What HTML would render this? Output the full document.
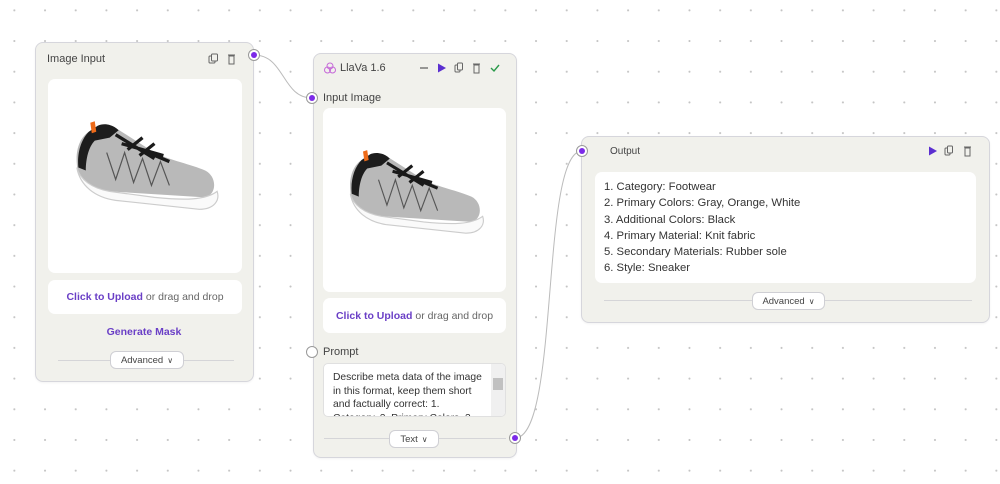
<!DOCTYPE html>
<html><head><meta charset="utf-8"><style>
*{box-sizing:border-box;margin:0;padding:0}
body{width:1000px;height:484px;overflow:hidden;position:relative;font-family:"Liberation Sans",sans-serif;color:#444;
background:#fff radial-gradient(circle,#c4c4c4 0.8px,transparent 1.2px);background-size:30.7px 30.7px;background-position:-1px -5px}
.node{position:absolute;background:#f1f1ec;border:1px solid #d6d6dc;border-radius:8px;box-shadow:0 1px 2px rgba(0,0,0,.05)}
.box{position:absolute;background:#fff;border-radius:7px}
.t{position:absolute;font-size:11px;color:#444;white-space:nowrap}
.up{display:flex;align-items:center;justify-content:center;font-size:10.5px;color:#666}
.up b{color:#6a3fc6;font-weight:bold;margin-right:3px}
.line{position:absolute;height:1px;background:#d5d5d8}
.btn{position:absolute;background:#fff;border:1px solid #cfcfd4;border-radius:6px;font-size:9.5px;color:#444;display:flex;align-items:center;justify-content:center;gap:4px}
.h{position:absolute;width:12px;height:12px;border-radius:50%;background:#fff;border:1px solid #999;}
.h.f::after{content:"";position:absolute;left:2px;top:2px;width:6px;height:6px;border-radius:50%;background:#7c2ae8}
svg.ic{position:absolute}
</style></head><body>
<svg style="position:absolute;left:0;top:0" width="1000" height="484">
<path d="M254 55 C285 55 282 98 312 98" stroke="#bbb" fill="none" stroke-width="1"/>
<path d="M515 438 C560 438 540 151 582 151" stroke="#bbb" fill="none" stroke-width="1"/>
<defs>
<g id="shoe">
<path d="M18 48 C17 38 20 30 26 26 L32 22 C36 20 42 22 48 26 L70 40 C80 45 95 48 104 52 C112 56 112 68 104 70 L40 66 C28 64 18 58 18 48Z" fill="#b9b9b9"/>
<path d="M18 50 C20 62 30 70 44 72 L100 78 C110 78 114 72 112 66 C104 72 90 72 70 70 L40 66 C28 64 20 58 18 50Z" fill="#fafafa" stroke="#ccc" stroke-width=".8"/>
<path d="M26 26 L32 22 C36 20 42 21 46 25 L40 30 L30 32 C26 36 24 44 24 52 L19 50 C18 40 21 31 26 26Z" fill="#1d1d1d"/>
<path d="M27 20 L30 19 L31 26 L28 27Z" fill="#ee6b1a"/>
<path d="M44 28 L70 44 M48 34 L76 42 M52 38 L62 30 M60 42 L70 34 M56 36 L80 46" stroke="#1a1a1a" stroke-width="2.2" fill="none"/>
<path d="M38 40 L44 58 L50 40 L56 60 L62 44 L68 62 L74 46 L80 62" stroke="#555" stroke-width=".8" fill="none"/>
</g>
</defs>
</svg>

<div class="node" style="left:35px;top:42px;width:219px;height:340px"></div>
<div class="t" style="left:47px;top:53px">Image Input</div>
<svg class="ic" style="left:208px;top:53px" width="32" height="12"><rect x="1" y="3" width="6" height="7" rx="1" fill="none" stroke="#666"/><rect x="3.5" y="1" width="6" height="7" rx="1" fill="#f1f1ec" stroke="#666"/><path d="M20 2h7M21 3h5v8h-5z" fill="none" stroke="#666"/></svg>
<div class="box" style="left:48px;top:79px;width:194px;height:194px">
<svg width="194" height="194" viewBox="0 0 130 130" style="position:absolute;left:2px;top:-4px"><use href="#shoe" transform="translate(0,12)"/></svg></div>
<div class="box up" style="left:48px;top:280px;width:194px;height:34px"><b>Click to Upload</b> or drag and drop</div>
<div class="t" style="left:0;width:288px;text-align:center;top:326px;color:#6a3fc6;font-weight:bold;font-size:10.5px">Generate Mask</div>
<div class="line" style="left:58px;top:360px;width:176px"></div>
<div class="btn" style="left:110px;top:351px;width:74px;height:18px">Advanced <span style="font-size:8px">&#8744;</span></div>
<div class="h f" style="left:248px;top:49px"></div>

<div class="node" style="left:313px;top:53px;width:204px;height:405px"></div>
<svg class="ic" style="left:324px;top:62px" width="12" height="12"><circle cx="6" cy="4" r="3" fill="none" stroke="#c569d8"/><circle cx="3.5" cy="8" r="3" fill="none" stroke="#c569d8"/><circle cx="8.5" cy="8" r="3" fill="none" stroke="#c569d8"/></svg>
<div class="t" style="left:340px;top:62px">LlaVa 1.6</div>
<svg class="ic" style="left:419px;top:62px" width="85" height="12"><path d="M1 6h8" stroke="#666" stroke-width="1.3"/><path d="M19 1.5l8 4.5-8 4.5z" fill="#5b2fd0"/><rect x="36" y="3" width="5" height="7" rx="1" fill="none" stroke="#666"/><rect x="38.5" y="1" width="5" height="7" rx="1" fill="#f1f1ec" stroke="#666"/><path d="M54 2h7M55 3h5v8h-5z" fill="none" stroke="#666"/><path d="M72 6l3 3 5-6" stroke="#2a9a4a" stroke-width="1.4" fill="none"/></svg>
<div class="h f" style="left:306px;top:92px"></div>
<div class="t" style="left:323px;top:92px">Input Image</div>
<div class="box" style="left:323px;top:108px;width:183px;height:184px">
<svg width="183" height="184" viewBox="0 0 130 130" style="position:absolute;left:2px;top:-2px"><use href="#shoe" transform="translate(0,12)"/></svg></div>
<div class="box up" style="left:323px;top:298px;width:183px;height:35px"><b>Click to Upload</b> or drag and drop</div>
<div class="h" style="left:306px;top:346px"></div>
<div class="t" style="left:323px;top:346px">Prompt</div>
<div class="box" style="left:323px;top:363px;width:183px;height:54px;border-radius:5px;overflow:hidden;border:1px solid #e0e0e0">
<div style="position:absolute;left:9px;top:7px;width:152px;font-size:10.3px;line-height:13.5px;color:#333">Describe meta data of the image in this format, keep them short and factually correct: 1. Category, 2. Primary Colors, 3.</div>
<div style="position:absolute;right:0;top:0;width:14px;height:54px;background:#f0f0f0"><div style="position:absolute;left:2px;top:14px;width:10px;height:12px;background:#c1c1c1"></div></div></div>
<div class="line" style="left:324px;top:438px;width:182px"></div>
<div class="btn" style="left:389px;top:430px;width:50px;height:18px">Text <span style="font-size:8px">&#8744;</span></div>
<div class="h f" style="left:509px;top:432px"></div>

<div class="node" style="left:581px;top:136px;width:409px;height:187px"></div>
<div class="h f" style="left:576px;top:145px"></div>
<div class="t" style="left:610px;top:146px;font-size:10px">Output</div>
<svg class="ic" style="left:927px;top:145px" width="50" height="12"><path d="M2 1.5l8 4.5-8 4.5z" fill="#5b2fd0"/><rect x="18" y="3" width="5" height="7" rx="1" fill="none" stroke="#666"/><rect x="20.5" y="1" width="5" height="7" rx="1" fill="#f1f1ec" stroke="#666"/><path d="M37 2h7M38 3h5v8h-5z" fill="none" stroke="#666"/></svg>
<div class="box" style="left:595px;top:172px;width:381px;height:111px;padding:7px 9px;font-size:11.3px;line-height:16.3px;color:#333">1. Category: Footwear<br>2. Primary Colors: Gray, Orange, White<br>3. Additional Colors: Black<br>4. Primary Material: Knit fabric<br>5. Secondary Materials: Rubber sole<br>6. Style: Sneaker</div>
<div class="line" style="left:604px;top:300px;width:368px"></div>
<div class="btn" style="left:752px;top:292px;width:73px;height:18px">Advanced <span style="font-size:8px">&#8744;</span></div>
</body></html>
